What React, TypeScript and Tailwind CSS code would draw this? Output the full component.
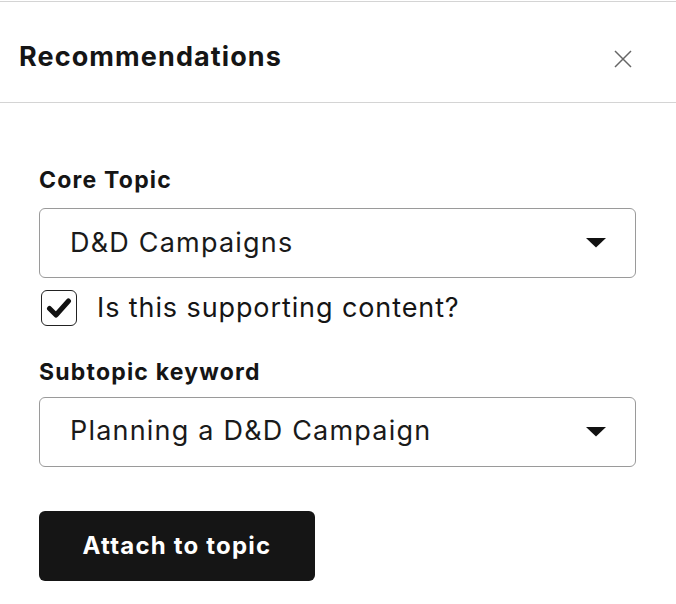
import { useState } from 'react'

function Caret() {
  return (
    <svg width="20" height="10" viewBox="0 0 20 10" className="shrink-0">
      <path d="M0 0h20L10 9.5z" fill="#111" />
    </svg>
  )
}

function SelectBox({ value }: { value: string }) {
  return (
    <div className="flex h-[70px] items-center justify-between rounded-[6px] border border-[#9a9a9a] bg-white pl-[30px] pr-[29px]">
      <span className="text-[27px] tracking-[1.2px] text-[#1a1a1a]">{value}</span>
      <Caret />
    </div>
  )
}

export default function App() {
  const [supporting, setSupporting] = useState(true)

  return (
    <div
      className="min-h-[604px] w-[676px] bg-white text-[#151515]"
      style={{ fontFamily: 'Inter, "Noto Sans", sans-serif' }}
    >
      {/* header */}
      <div className="mt-px flex h-[102px] items-center justify-between border-y border-[#d4d4d4] pl-[19px] pr-[44px] pt-[10px]">
        <h2 className="text-[27px] font-bold tracking-[1.1px]">Recommendations</h2>
        <button className="mt-[3px] text-[#666]" aria-label="Close">
          <svg width="18" height="18" viewBox="0 0 18 18" fill="none" stroke="currentColor" strokeWidth="1.5">
            <path d="M1 1l16 16M17 1L1 17" />
          </svg>
        </button>
      </div>

      <div className="pl-[39px] pr-[40px] pt-[64px]">
        <label className="block text-[23px] font-bold leading-[26px] tracking-[1.2px]">Core Topic</label>
        <div className="mt-[15px]">
          <SelectBox value="D&D Campaigns" />
        </div>

        <label className="mt-[10px] flex cursor-pointer items-center gap-[20px]">
          <span
            onClick={() => setSupporting(!supporting)}
            className="ml-[2px] flex h-[36px] w-[36px] items-center justify-center rounded-[6px] border border-[#222] bg-white"
          >
            {supporting && (
              <svg width="26" height="22" viewBox="0 0 26 22" fill="none" stroke="#111" strokeWidth="5" strokeLinecap="round" strokeLinejoin="round">
                <path d="M3.5 11.5l6.5 6.5L22.5 4" />
              </svg>
            )}
          </span>
          <span className="text-[27px] tracking-[0.9px]">Is this supporting content?</span>
        </label>

        <label className="mt-[30px] block text-[23px] font-bold leading-[26px] tracking-[1.2px]">Subtopic keyword</label>
        <div className="mt-[12px]">
          <SelectBox value="Planning a D&D Campaign" />
        </div>

        <button className="mt-[44px] h-[70px] w-[276px] rounded-[6px] bg-[#151515] text-[24px] font-bold tracking-[1.2px] text-white">
          Attach to topic
        </button>
      </div>
    </div>
  )
}
